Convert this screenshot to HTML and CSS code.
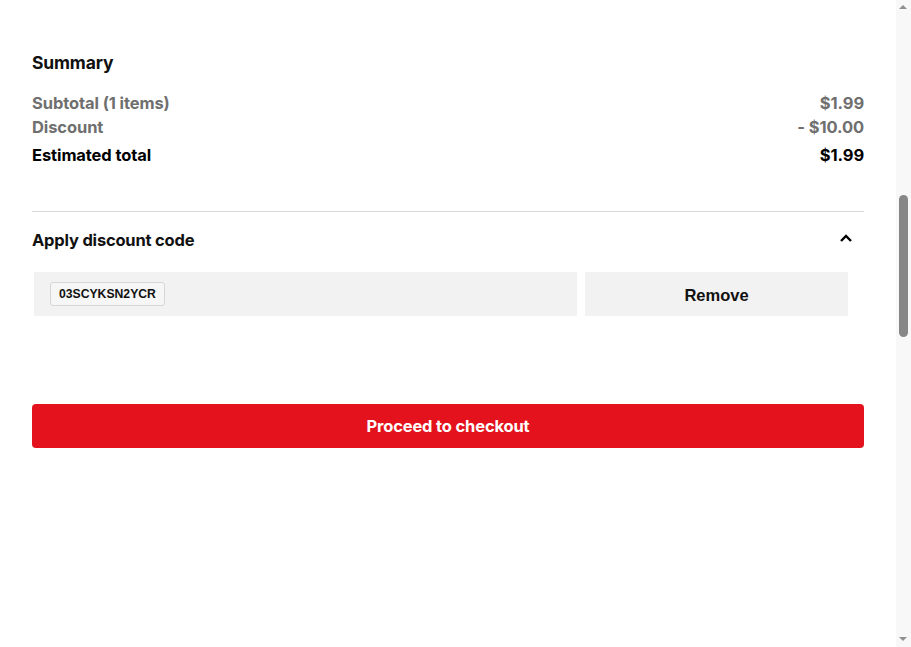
FILE: index.html
```html
<!DOCTYPE html>
<html lang="en">
<head>
<meta charset="utf-8">
<title>Summary</title>
<link rel="stylesheet" href="styles.css">
</head>
<body>
<main class="page">
  <section class="summary">
    <h2 class="title">Summary</h2>
    <div class="rows">
      <div class="row muted"><span>Subtotal (1 items)</span><span>$1.99</span></div>
      <div class="row muted"><span>Discount</span><span>- $10.00</span></div>
      <div class="row total"><span>Estimated total</span><span>$1.99</span></div>
    </div>
  </section>
  <section class="discount">
    <div class="discount-head">
      <span>Apply discount code</span>
      <svg class="chev" width="14" height="10" viewBox="0 0 14 10"><path d="M2 8 L7 3 L12 8" fill="none" stroke="#000" stroke-width="2.4"/></svg>
    </div>
    <div class="discount-body">
      <div class="code-field"><span class="chip">03SCYKSN2YCR</span></div>
      <button class="remove">Remove</button>
    </div>
  </section>
  <button class="checkout">Proceed to checkout</button>
</main>
<div class="scrollbar">
  <span class="arrow up"></span>
  <span class="thumb"></span>
  <span class="arrow down"></span>
</div>
</body>
</html>
```
FILE: styles.css
```css
html, body { margin: 0; padding: 0; background: #fff; }
body { font-family: Inter, "Liberation Sans", sans-serif; color: #000; }
.page { width: 832px; padding: 52px 0 0 32px; }
.title { margin: 0; font-size: 17.5px; font-weight: 700; letter-spacing: -0.15px; line-height: 22px; color: #111; }
.rows { margin-top: 17px; display: flex; flex-direction: column; }
.row { display: flex; justify-content: space-between; font-size: 16.5px; font-weight: 700; letter-spacing: -0.1px; line-height: 24px; }
.row.muted { color: #6f6f6f; }
.row.total { color: #000; margin-top: 4px; }
.discount { margin-top: 44px; border-top: 1px solid #d8dada; }
.discount-head { display: flex; justify-content: space-between; align-items: center; height: 56px; font-size: 16.5px; font-weight: 700; letter-spacing: -0.2px; color: #111; padding-right: 11px; }
.chev { margin-top: -5px; }
.discount-body { display: flex; gap: 8px; padding: 4px 16px 0 2px; }
.code-field { width: 543px; height: 44px; background: #f2f2f2; display: flex; align-items: center; padding-left: 16px; box-sizing: border-box; }
.chip { font-family: "Liberation Sans", Arial, sans-serif; font-weight: 700; font-size: 12.2px; color: #111; background: #f6f6f6; border: 1px solid #d6d6d6; border-radius: 3px; padding: 0 8px; height: 22px; line-height: 22px; }
.remove { width: 263px; height: 44px; border: 0; background: #f2f2f2; font-family: "Liberation Sans", Arial, sans-serif; font-size: 16.5px; font-weight: 700; color: #111; padding: 3px 0 0; }
.checkout { display: block; margin-top: 88px; width: 832px; height: 44px; border: 0; border-radius: 4px; background: #e4121c; color: #fff; font-family: Inter, "Liberation Sans", sans-serif; font-size: 16.5px; font-weight: 700; letter-spacing: -0.15px; padding: 0; }
.scrollbar { position: fixed; top: 0; right: 0; width: 15px; height: 647px; background: #f8f8f8; }
.arrow { position: absolute; left: 3px; width: 0; height: 0; border-left: 4px solid transparent; border-right: 4px solid transparent; }
.arrow.up { top: 5px; border-bottom: 4px solid #8f8f8f; }
.arrow.down { bottom: 6px; border-top: 4px solid #8f8f8f; }
.thumb { position: absolute; left: 3px; top: 195px; width: 9px; height: 142px; border-radius: 5px; background: #878787; }
```
